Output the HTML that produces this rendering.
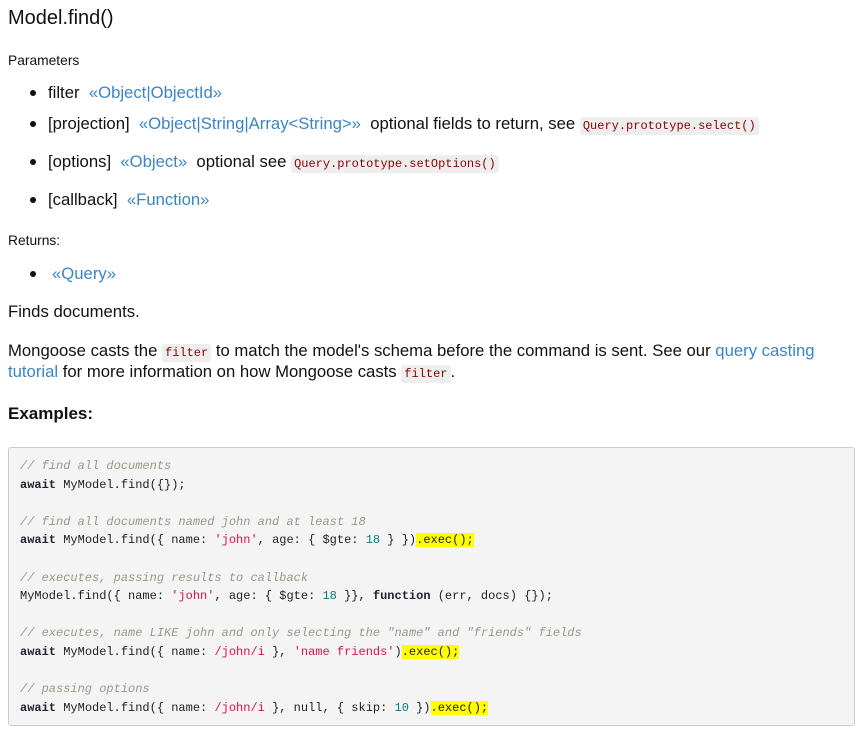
<!DOCTYPE html>
<html><head><meta charset="utf-8"><style>
body{margin:0;background:#fff;width:862px;height:733px;overflow:hidden;font-family:"Liberation Sans",sans-serif;color:#111;position:relative}
.a{position:absolute;white-space:nowrap}
.t{font-size:16.7px}
.l{color:#3a85c6}
.b{position:absolute;width:6px;height:6px;border-radius:50%;background:#111}
code{font-family:"Liberation Mono",monospace;font-size:12px;color:#8b0000;background:#eee;border-radius:3px;padding:2px 3px}
pre{position:absolute;left:8px;top:447px;width:847px;height:279px;margin:0;box-sizing:border-box;background:#f4f4f4;border:1px solid #ccc;border-radius:3px;padding:9px 11px;font-family:"Liberation Mono",monospace;font-size:12px;line-height:18.6px;color:#222}
.c{color:#998;font-style:italic}
.k{font-weight:bold;color:#223}
.s{color:#d14}
.n{color:#008080}
.h{background:#ff0}
</style></head><body>
<div class="a" style="left:8px;top:7px;font-size:20px">Model.find()</div>
<div class="a" style="left:8px;top:53px;font-size:13.8px">Parameters</div>
<div class="b" style="left:30px;top:90px"></div>
<div class="a t" style="left:48px;top:83px">filter &nbsp;<span class="l">«Object|ObjectId»</span></div>
<div class="b" style="left:30px;top:121px"></div>
<div class="a t" style="left:48px;top:114px">[projection] &nbsp;<span class="l">«Object|String|Array&lt;String&gt;»</span> &nbsp;optional fields to return, see <code>Query.prototype.select()</code></div>
<div class="b" style="left:30px;top:159px"></div>
<div class="a t" style="left:48px;top:152px">[options] &nbsp;<span class="l">«Object»</span> &nbsp;optional see <code>Query.prototype.setOptions()</code></div>
<div class="b" style="left:30px;top:197px"></div>
<div class="a t" style="left:48px;top:190px">[callback] &nbsp;<span class="l">«Function»</span></div>
<div class="a" style="left:8px;top:233px;font-size:13.8px">Returns:</div>
<div class="b" style="left:30px;top:271px"></div>
<div class="a t" style="left:52px;top:264px"><span class="l">«Query»</span></div>
<div class="a t" style="left:8px;top:302px">Finds documents.</div>
<div class="a t" style="left:8px;top:341px">Mongoose casts the <code>filter</code> to match the model's schema before the command is sent. See our <span class="l">query casting</span></div>
<div class="a t" style="left:8px;top:362px"><span class="l">tutorial</span> for more information on how Mongoose casts <code>filter</code>.</div>
<div class="a" style="left:8px;top:404px;font-size:17px;font-weight:bold">Examples:</div>
<pre><span class="c">// find all documents</span>
<span class="k">await</span> MyModel.find({});

<span class="c">// find all documents named john and at least 18</span>
<span class="k">await</span> MyModel.find({ name: <span class="s">'john'</span>, age: { $gte: <span class="n">18</span> } })<span class="h">.exec();</span>

<span class="c">// executes, passing results to callback</span>
MyModel.find({ name: <span class="s">'john'</span>, age: { $gte: <span class="n">18</span> }}, <span class="k">function</span> (err, docs) {});

<span class="c">// executes, name LIKE john and only selecting the "name" and "friends" fields</span>
<span class="k">await</span> MyModel.find({ name: <span class="s">/john/i</span> }, <span class="s">'name friends'</span>)<span class="h">.exec();</span>

<span class="c">// passing options</span>
<span class="k">await</span> MyModel.find({ name: <span class="s">/john/i</span> }, null, { skip: <span class="n">10</span> })<span class="h">.exec();</span></pre>
</body></html>
